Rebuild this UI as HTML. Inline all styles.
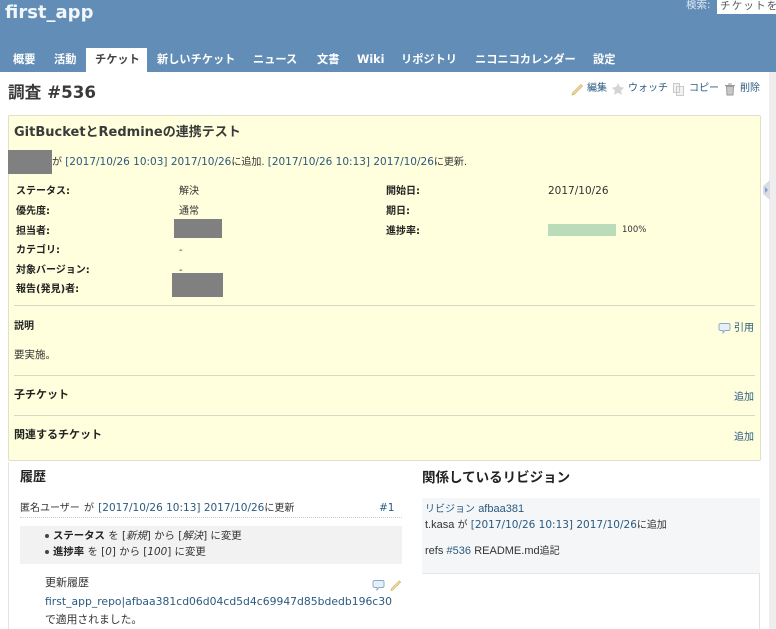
<!DOCTYPE html>
<html><head><meta charset="utf-8">
<style>
html,body{margin:0;padding:0;}
body{width:776px;height:629px;position:relative;overflow:hidden;background:#fff;font-family:"DejaVu Sans","Noto Sans CJK JP",sans-serif;font-size:10px;color:#333;}
.t{position:absolute;white-space:nowrap;line-height:14px;}
.b{font-weight:bold;color:#222;}
.a{color:#2a5a80;}
.d{font-size:10.5px;color:#2a5a80;}
.l{font-family:"Liberation Sans","Noto Sans CJK JP",sans-serif;font-size:10.5px;}
.r{position:absolute;}
.tab{position:absolute;top:52px;line-height:16px;color:#fff;font-weight:bold;font-size:11.2px;white-space:nowrap;}
.g{position:absolute;background:#808080;}
.hr{position:absolute;left:14px;width:741px;height:1px;background:#d8d8c4;}
svg{position:absolute;}
</style></head><body>
<div class="r" style="left:0;top:0;width:776px;height:72px;background:#628db6;"></div>
<div class="r" style="left:769px;top:72px;width:7px;height:557px;background:#eeeeee;"></div>
<div class="t" style="left:5px;top:0;font-size:18px;line-height:26px;font-weight:bold;color:#f2f6fa;">first_app</div>
<div class="t" style="left:686px;top:-2px;color:#dbe7f1;font-size:10.5px;">検索:</div>
<div class="r" style="left:717px;top:0;width:59px;height:14px;background:#fff;"></div>
<div class="t" style="left:720px;top:-1px;color:#555;letter-spacing:1.2px;font-size:10.5px;">チケットを</div>

<div class="r" style="left:86px;top:48px;width:61px;height:24px;background:#fff;"></div>
<div class="tab" style="left:13px;">概要</div>
<div class="tab" style="left:54px;">活動</div>
<div class="tab" style="left:95px;color:#444;">チケット</div>
<div class="tab" style="left:157px;">新しいチケット</div>
<div class="tab" style="left:253px;">ニュース</div>
<div class="tab" style="left:317px;">文書</div>
<div class="tab" style="left:357px;">Wiki</div>
<div class="tab" style="left:401px;">リポジトリ</div>
<div class="tab" style="left:475px;">ニコニコカレンダー</div>
<div class="tab" style="left:593px;">設定</div>

<div class="t" style="left:8px;top:81px;font-size:16.700px;line-height:22px;font-weight:bold;color:#3a3a3a;">調査 #536</div>

<svg style="left:570px;top:82px" width="14" height="14" viewBox="0 0 14 14"><path d="M2.500 11L11 2.500l1.500 1.500L4 12.500l-2 .5z" fill="#f3dc9c" stroke="#cdb06a" stroke-width=".7"/></svg>
<div class="t a" style="left:587px;top:82px;">編集</div>
<svg style="left:611px;top:82px" width="14" height="14" viewBox="0 0 14 14"><path d="M7 1l1.900 4 4.300.6-3.100 3 .8 4.300L7 10.800 3.100 12.900l.8-4.300-3.100-3 4.300-.6z" fill="#d4d4d4"/></svg>
<div class="t a" style="left:628px;top:82px;">ウォッチ</div>
<svg style="left:672px;top:82px" width="13" height="14" viewBox="0 0 13 14"><path d="M1.500 1.500h6v9h-6zM4.500 4.500h7v9h-7z" fill="#f2f2f2" stroke="#cacaca"/></svg>
<div class="t a" style="left:689px;top:82px;">コピー</div>
<svg style="left:724px;top:83px" width="12" height="13" viewBox="0 0 12 13"><path d="M1 2.500h10M2.500 3.500l.5 8.500h6l.5-8.500zM4 1h4" fill="#c8c8c8" stroke="#999"/></svg>
<div class="t a" style="left:740px;top:82px;">削除</div>

<div class="r" style="left:8px;top:115px;width:751px;height:344px;background:#ffffdd;border:1px solid #e0dfc8;border-radius:2px;"></div>
<div class="t" style="left:14px;top:123px;font-size:13px;line-height:20px;font-weight:bold;color:#3a3a3a;">GitBucketとRedmineの連携テスト</div>
<div class="g" style="left:8px;top:150px;width:44px;height:24px;"></div>
<div class="t" style="left:52px;top:155px;">が <span class="d">[2017/10/26 10:03] 2017/10/26</span>に追加. <span class="d">[2017/10/26 10:13] 2017/10/26</span>に更新.</div>

<div class="t b" style="left:16px;top:185px;">ステータス:</div><div class="t" style="left:179px;top:185px;">解決</div>
<div class="t b" style="left:16px;top:205px;">優先度:</div><div class="t" style="left:179px;top:205px;">通常</div>
<div class="t b" style="left:16px;top:225px;">担当者:</div><div class="g" style="left:174px;top:219px;width:48px;height:19px;"></div>
<div class="t b" style="left:16px;top:244px;">カテゴリ:</div><div class="t" style="left:179px;top:244px;">-</div>
<div class="t b" style="left:16px;top:264px;">対象バージョン:</div><div class="t" style="left:179px;top:264px;">-</div>
<div class="t b" style="left:16px;top:283px;">報告(発見)者:</div><div class="g" style="left:172px;top:273px;width:51px;height:24px;"></div>

<div class="t b" style="left:386px;top:185px;">開始日:</div><div class="t" style="left:548px;top:184px;font-size:10.5px;">2017/10/26</div>
<div class="t b" style="left:386px;top:205px;">期日:</div>
<div class="t b" style="left:386px;top:225px;">進捗率:</div>
<div class="r" style="left:548px;top:224px;width:68px;height:12px;background:#badcb8;"></div>
<div class="t" style="left:622px;top:223px;font-size:8.500px;">100%</div>

<div class="hr" style="top:305px;"></div>
<div class="t b" style="left:14px;top:320px;">説明</div>
<svg style="left:718px;top:322px" width="13" height="13" viewBox="0 0 13 13"><path d="M2.500 1.500h8a1.500 1.500 0 0 1 1.500 1.500v4a1.500 1.500 0 0 1-1.500 1.500H7L5 11V8.500H2.500A1.500 1.500 0 0 1 1 7V3a1.500 1.500 0 0 1 1.500-1.500z" fill="#e6eff8" stroke="#8aa8c6" stroke-width=".9"/></svg>
<div class="t a" style="left:734px;top:322px;">引用</div>
<div class="t" style="left:14px;top:348px;font-size:10.5px;">要実施。</div>
<div class="hr" style="top:375px;"></div>
<div class="t b" style="left:14px;top:388px;font-size:11px;">子チケット</div>
<div class="t a" style="left:734px;top:391px;">追加</div>
<div class="hr" style="top:415px;"></div>
<div class="t b" style="left:14px;top:428px;font-size:11px;">関連するチケット</div>
<div class="t a" style="left:734px;top:431px;">追加</div>

<div class="r" style="left:8px;top:462px;width:1px;height:167px;background:#e4e4e4;"></div>
<div class="t b" style="left:20px;top:469px;font-size:13px;line-height:17px;">履歴</div>
<div class="t" style="left:20px;top:501px;">匿名ユーザー<span style="margin:0 1px"> が </span><span class="d">[2017/10/26 10:13] 2017/10/26</span>に更新</div>
<div class="t a" style="left:379px;top:501px;font-size:10.5px;">#1</div>
<div class="r" style="left:20px;top:517px;width:382px;height:0;border-top:1px dotted #ccc;"></div>
<div class="r" style="left:20px;top:526px;width:382px;height:38px;background:#f2f2f2;"></div>
<div class="t" style="left:44px;top:529px;font-size:10.4px;"><span style="position:absolute;left:1px;top:5px;width:4px;height:4px;border-radius:2px;background:#444;"></span><span style="margin-left:9px;"><b style="color:#222">ステータス</b> を [<i>新規</i>] から [<i>解決</i>] に変更</span></div>
<div class="t" style="left:44px;top:545px;font-size:10.4px;"><span style="position:absolute;left:1px;top:5px;width:4px;height:4px;border-radius:2px;background:#444;"></span><span style="margin-left:9px;"><b style="color:#222">進捗率</b> を [<i>0</i>] から [<i>100</i>] に変更</span></div>
<div class="t" style="left:45px;top:576px;font-size:11px;">更新履歴</div>
<svg style="left:372px;top:579px" width="13" height="13" viewBox="0 0 13 13"><path d="M2.500 1.500h8a1.500 1.500 0 0 1 1.500 1.500v4a1.500 1.500 0 0 1-1.500 1.500H7L5 11V8.500H2.500A1.500 1.500 0 0 1 1 7V3a1.500 1.500 0 0 1 1.500-1.500z" fill="#e6eff8" stroke="#8aa8c6" stroke-width=".9"/></svg>
<svg style="left:389px;top:578px" width="13" height="14" viewBox="0 0 14 14"><path d="M2.500 11L11 2.500l1.500 1.500L4 12.500l-2 .5z" fill="#f3dc9c" stroke="#cdb06a" stroke-width=".7"/></svg>
<div class="t a" style="left:45px;top:595px;font-size:10.800px;">first_app_repo|afbaa381cd06d04cd5d4c69947d85bdedb196c30</div>
<div class="t" style="left:45px;top:613px;font-size:10.800px;">で適用されました。</div>

<div class="t b" style="left:422px;top:469px;font-size:13.500px;line-height:18px;">関係しているリビジョン</div>
<div class="r" style="left:422px;top:498px;width:338px;height:75px;background:#f4f6f8;"></div>
<div class="r" style="left:422px;top:573px;width:338px;height:56px;background:#fff;border-top:1px solid #e8e8e8;border-right:1px solid #e0e0e0;box-sizing:border-box;"></div>
<div class="t a" style="left:425px;top:502px;">リビジョン <span class="l" style="font-size:11px;">afbaa381</span></div>
<div class="t" style="left:425px;top:518px;"><span class="l" style="font-size:11px;">t.kasa</span> が <span class="d">[2017/10/26 10:13] 2017/10/26</span>に追加</div>
<div class="t" style="left:425px;top:544px;"><span class="l" style="font-size:11px;">refs</span> <span class="l a" style="font-size:11px;">#536</span> <span class="l" style="font-size:11px;">README.md</span>追記</div>

<svg style="left:763px;top:180px" width="7" height="20" viewBox="0 0 7 20"><path d="M7 0L0 6v8l7 6z" fill="#d8dde4"/><path d="M2 7l3 3-3 3z" fill="#7d9fd0"/></svg>
</body></html>
